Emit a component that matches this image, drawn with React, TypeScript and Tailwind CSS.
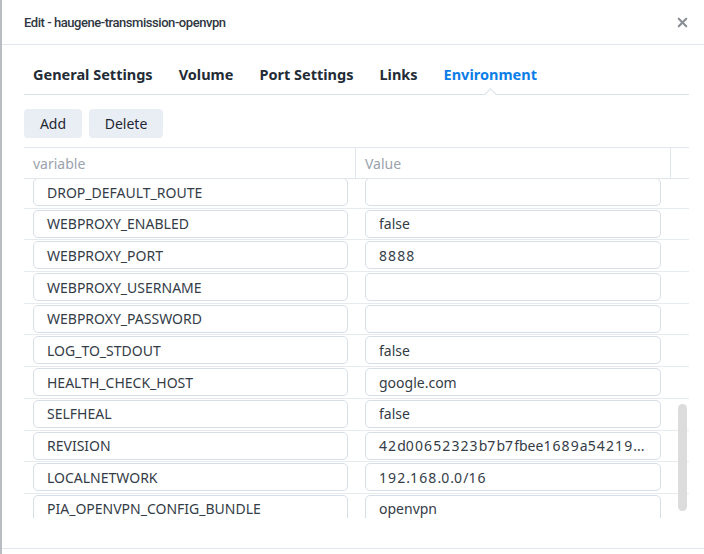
import { X } from 'lucide-react';

const rows: [string, string][] = [
  ['DROP_DEFAULT_ROUTE', ''],
  ['WEBPROXY_ENABLED', 'false'],
  ['WEBPROXY_PORT', '8888'],
  ['WEBPROXY_USERNAME', ''],
  ['WEBPROXY_PASSWORD', ''],
  ['LOG_TO_STDOUT', 'false'],
  ['HEALTH_CHECK_HOST', 'google.com'],
  ['SELFHEAL', 'false'],
  ['REVISION', '42d00652323b7b7fbee1689a54219...'],
  ['LOCALNETWORK', '192.168.0.0/16'],
  ['PIA_OPENVPN_CONFIG_BUNDLE', 'openvpn'],
];

const tabs = ['General Settings', 'Volume', 'Port Settings', 'Links', 'Environment'];

// digits in the original font run wider than Noto Sans, so space them out a bit
function Value({ text }: { text: string }) {
  const parts = text.split(/(\d+)/).filter(Boolean);
  return (
    <>
      {parts.map((p, i) =>
        /^\d+$/.test(p) ? (
          <span key={i} className="tracking-[1.1px]">
            {p}
          </span>
        ) : (
          <span key={i}>{p}</span>
        ),
      )}
    </>
  );
}

export default function App() {
  return (
    <div
      className="flex h-[554px] w-[704px] flex-col overflow-hidden border-l-2 border-[#b9bcc0] bg-white text-[#333a45]"
      style={{ fontFamily: '"Noto Sans", "DejaVu Sans", sans-serif' }}
    >
      <div className="flex h-[45px] shrink-0 items-center justify-between border-b border-[#e1e6ec] pl-[22px] pr-[14px]">
        <h1
          className="pt-[2px] text-[13px] font-medium tracking-[-0.45px] text-[#2f3742]"
          style={{ fontFamily: 'Roboto, sans-serif' }}
        >
          Edit - haugene-transmission-openvpn
        </h1>
        <X className="h-[15px] w-[15px] text-[#8a8f96]" strokeWidth={3.4} />
      </div>

      <div className="flex min-h-0 flex-1 flex-col pl-[22px] pr-[15px]">
        <div className="relative mt-[14px] flex h-[36px] shrink-0 items-center gap-[26px] border-b border-[#d8e1ea] pb-[4px] pl-[9px]">
          {tabs.map((t) => (
            <span
              key={t}
              className={`text-[14.5px] font-bold ${t === 'Environment' ? 'text-[#0a7ee8]' : 'text-[#232b36]'}`}
            >
              {t}
            </span>
          ))}
          <span className="absolute bottom-[-5px] left-[462px] h-[9px] w-[9px] rotate-45 border-l border-t border-[#d8e1ea] bg-white" />
        </div>

        <div className="mt-[14px] flex shrink-0 gap-[7px]">
          <button className="h-[29px] w-[58px] rounded-[4px] bg-[#e9eef4] text-[14px] text-[#1f2733]">Add</button>
          <button className="h-[29px] w-[74px] rounded-[4px] bg-[#e9eef4] text-[14px] text-[#1f2733]">Delete</button>
        </div>

        <div className="relative z-10 mt-[9px] flex h-[32px] shrink-0 border-y border-[#e1e6ec] bg-white text-[14px] text-[#9aa2ad]">
          <div className="flex w-[332px] items-center border-r border-[#e1e6ec] pl-[9px]">variable</div>
          <div className="flex w-[315px] items-center border-r border-[#e1e6ec] pl-[9px]">Value</div>
          <div className="flex-1" />
        </div>

        <div className="relative h-[339px] shrink-0 overflow-hidden">
          <div className="-mt-[2px]">
            {rows.map(([k, v]) => (
              <div key={k} className="flex h-[31.7px] items-start border-b border-[#e6ebf0] pt-[1px] text-[14px] text-[#343c47]">
                <div className="ml-[9px] flex h-[28px] w-[315px] items-center rounded-[5px] border border-[#d6dee8] pl-[13px]">
                  {k}
                </div>
                <div className="ml-[17px] flex h-[28px] w-[296px] items-center overflow-hidden whitespace-nowrap rounded-[5px] border border-[#d6dee8] pl-[13px]">
                  <Value text={v} />
                </div>
              </div>
            ))}
          </div>
          <div className="absolute right-[2px] top-[225px] h-[107px] w-[9px] rounded-full bg-[#dcdcdc]" />
        </div>

        <div className="flex-1" />
      </div>
      <div className="h-[6px] shrink-0 border-t border-[#e1e6ec]" />
    </div>
  );
}
